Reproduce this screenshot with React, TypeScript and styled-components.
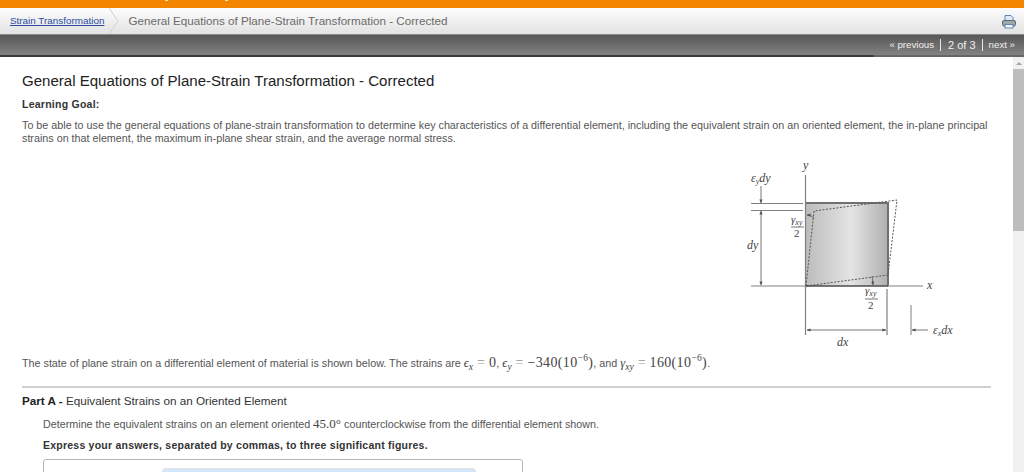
import React from "react";
import styled, { createGlobalStyle } from "styled-components";

const Global = createGlobalStyle`
  html, body { margin: 0; padding: 0; height: 100%; overflow: hidden; background: #fff; }
  body { font-family: "Liberation Sans", Arial, sans-serif; }
  #root { height: 472px; }
`;

const Page = styled.div`
  width: 1024px;
  height: 472px;
  display: flex;
  flex-direction: column;
  overflow: hidden;
`;
const OrangeBar = styled.div`
  height: 8px;
  flex: none;
  display: flex;
  gap: 57px;
  padding-left: 165px;
  box-sizing: border-box;
  background: #f38500;
`;
const Speck = styled.span`
  width: 3px;
  height: 1px;
  background: #fbe3c4;
`;
const Crumbs = styled.div`
  height: 27px;
  box-sizing: border-box;
  flex: none;
  display: flex;
  align-items: center;
  padding: 0 8px 2px 10px;
  background: linear-gradient(#fdfdfd, #e2e2e2);
  border-bottom: 1px solid #8a8a8a;
`;
const CrumbLink = styled.a`
  color: #2b4aa0;
  text-decoration: underline;
  font-size: 9.9px;
`;
const CrumbSep = styled.svg`
  width: 12px;
  height: 26px;
  margin: 2px 7px 0 5px;
  flex: none;
`;
const CrumbTitle = styled.span`
  flex: 1;
  color: #6a6a6a;
  font-size: 11.65px;
`;
const NavBar = styled.div`
  height: 20px;
  flex: none;
  display: flex;
  align-items: center;
  justify-content: flex-end;
  padding-right: 3px;
  background: linear-gradient(#575757, #828282);
  border-bottom: 2px solid;
  border-image: linear-gradient(to right, #3a3a3a 873px, #666 873px) 1;
  color: #f0f0f0;
  font-size: 9.7px;
`;
const NavItem = styled.span<{ $sep?: boolean }>`
  padding: 0 6px;
  line-height: 12px;
  border-left: ${(p) => (p.$sep ? "1px solid #e6e6e6" : "none")};
`;
const NavCount = styled(NavItem)`
  padding: 0 6px 0 7px;
  font-size: 11px;
`;
const Body = styled.div`
  flex: 1;
  min-height: 0;
  display: flex;
`;
const Main = styled.main`
  flex: 1;
  min-width: 0;
  overflow: hidden;
  padding: 15px 22px 0 22px;
`;
const Scrollbar = styled.div`
  width: 11px;
  flex: none;
  display: flex;
  flex-direction: column;
  background: #f1f1f1;
`;
const ScrollUp = styled.div`
  height: 12px;
  flex: none;
  display: flex;
  align-items: center;
  justify-content: center;
  &::before {
    content: "";
    border-left: 3px solid transparent;
    border-right: 3px solid transparent;
    border-bottom: 3px solid #a3a3a3;
  }
`;
const ScrollThumb = styled.div`
  height: 162px;
  flex: none;
  background: #bdbdbd;
`;
const Heading = styled.h1`
  margin: 0;
  font-size: 15.05px;
  line-height: 18px;
  font-weight: normal;
  color: #222;
`;
const GoalLabel = styled.div`
  margin-top: 8px;
  font-size: 10.5px;
  line-height: 13px;
  font-weight: bold;
  letter-spacing: 0.25px;
  color: #333;
`;
const Para = styled.p`
  margin: 8px 0 0;
  font-size: 10.75px;
  line-height: 13px;
  color: #555;
`;
const FigureRow = styled.div`
  display: flex;
  justify-content: flex-end;
  margin-top: 8px;
  padding-right: 21px;
`;
const Figure = styled.svg`
  width: 240px;
  height: 195px;
  display: block;
  flex: none;
`;
const StateLine = styled.p`
  margin: 6px 0 0;
  height: 18px;
  font-size: 10.75px;
  line-height: 18px;
  color: #555;
  white-space: nowrap;
`;
const MathText = styled.span`
  font-family: "Liberation Serif", serif;
  font-size: 14px;
  line-height: 1;
  letter-spacing: 0.35px;
  color: #444;
`;
const Angle = styled(MathText)`
  font-size: 13px;
  letter-spacing: 0;
`;
const Eq = styled.span`
  margin: 0 4px;
  font-family: "Liberation Serif", serif;
  font-size: 14px;
  line-height: 1;
  color: #999;
`;
const MathVar = styled.i`
  font-family: "Liberation Serif", serif;
  font-size: 12.5px;
  line-height: 1;
  color: #444;
`;
const Sub = styled.sub`
  font-family: "Liberation Serif", serif;
  font-size: 9.5px;
  font-style: italic;
  line-height: 0;
  color: #444;
`;
const Sup = styled.sup`
  font-family: "Liberation Serif", serif;
  font-size: 9.5px;
  line-height: 0;
`;
const Rule = styled.hr`
  margin: 14px 0 0;
  height: 2px;
  border: none;
  background: #cfcfcf;
`;
const PartTitle = styled.h2`
  margin: 5px 0 0;
  font-size: 11.7px;
  line-height: 15px;
  font-weight: normal;
  color: #333;
`;
const PartStrong = styled.strong`
  font-weight: bold;
  color: #222;
`;
const PartBody = styled.div`
  padding-left: 21px;
`;
const PartPara = styled.p`
  margin: 9px 0 0;
  font-size: 10.75px;
  line-height: 14px;
  color: #555;
`;
const Instruction = styled.p`
  margin: 7px 0 0;
  font-size: 10.5px;
  line-height: 14px;
  font-weight: bold;
  letter-spacing: 0.23px;
  color: #333;
`;
const AnswerBox = styled.div`
  width: 480px;
  height: 40px;
  margin-top: 7px;
  padding: 8px 0 0 118px;
  box-sizing: border-box;
  border: 1px solid #b5b5b5;
  border-radius: 3px;
`;
const AnswerBar = styled.div`
  width: 314px;
  height: 30px;
  box-sizing: border-box;
  border-top: 1px solid #e2e2e2;
  border-radius: 4px;
  background: #d3e6fa;
`;
const PrinterSvg = styled.svg`
  width: 14px;
  height: 14px;
  margin-top: 3px;
  flex: none;
`;

const PrinterIcon = () => (
  <PrinterSvg viewBox="0 0 14 14" aria-hidden="true">
    <path d="M3 6V0.5h6l2 2V6z" fill="#dbe9f8" stroke="#5f86b3" />
    <rect x="0.5" y="5.5" width="13" height="5.5" rx="1.5" fill="#9ea6ae" stroke="#5e6972" />
    <rect x="3" y="9.5" width="8" height="3.5" fill="#f2f6fa" stroke="#5f86b3" />
  </PrinterSvg>
);

const serif = { fontFamily: "'Liberation Serif', serif", fill: "#444" } as const;

const Diagram = () => (
  <Figure viewBox="0 0 240 195" aria-label="Strain diagram">
    <defs>
      <linearGradient id="steel" x1="0" x2="1" y1="0" y2="0">
        <stop offset="0" stopColor="#bcbcbc" />
        <stop offset="0.55" stopColor="#e4e4e4" />
        <stop offset="1" stopColor="#b0b0b0" />
      </linearGradient>
      <marker id="ah" markerWidth="5" markerHeight="5" refX="4.5" refY="2.5" orient="auto-start-reverse">
        <path d="M0 0.5 L5 2.5 L0 4.5z" fill="#555" />
      </marker>
    </defs>
    <rect x="76" y="50" width="82" height="83" fill="url(#steel)" />
    <path d="M76 50H158V133" fill="none" stroke="#707070" strokeWidth="2" />
    <g stroke="#808080" strokeWidth="1.2" fill="none">
      <path d="M75.5 22V182" />
      <path d="M21 133H193" />
      <path d="M21 50.5H73M21 57.5H73" />
      <path d="M157 136V182" />
      <path d="M181 152V182" stroke="#aaa" strokeWidth="1.5" />
    </g>
    <path d="M76 133L84 58L167 47L158 122L76 133" fill="none" stroke="#555" strokeWidth="1" strokeDasharray="2 1.5" />
    <path d="M76 133H158" stroke="#333" strokeWidth="1" />
    <g stroke="#555" strokeWidth="0.8" fill="none">
      <path d="M31 33V50" markerEnd="url(#ah)" />
      <path d="M31 58V132" markerStart="url(#ah)" markerEnd="url(#ah)" />
      <path d="M77 177H156" markerStart="url(#ah)" markerEnd="url(#ah)" />
      <path d="M198 177H182" markerEnd="url(#ah)" />
      <path d="M84 65 A10 10 0 0 0 77 62" markerEnd="url(#ah)" />
      <path d="M142 123 L143 132" markerEnd="url(#ah)" />
    </g>
    <g fontSize="12" fontStyle="italic" style={serif}>
      <text x="73" y="16">y</text>
      <text x="21" y="29">ε<tspan fontSize="8" dy="2">y</tspan><tspan dy="-2">dy</tspan></text>
      <text x="17" y="96">dy</text>
      <text x="197" y="136">x</text>
      <text x="107" y="193">dx</text>
      <text x="203" y="181">ε<tspan fontSize="8" dy="2">x</tspan><tspan dy="-2">dx</tspan></text>
    </g>
    <g fontSize="11" style={serif}>
      <text x="61" y="70" fontStyle="italic">γ<tspan fontSize="8" dy="2">xy</tspan></text>
      <path d="M61 74H74" stroke="#555" strokeWidth="0.8" />
      <text x="64" y="84">2</text>
      <text x="135" y="141" fontStyle="italic">γ<tspan fontSize="8" dy="2">xy</tspan></text>
      <path d="M135 146H148" stroke="#555" strokeWidth="0.8" />
      <text x="138" y="156">2</text>
    </g>
  </Figure>
);

export default function App() {
  return (
    <Page>
      <Global />
      <OrangeBar>
        <Speck />
        <Speck />
      </OrangeBar>
      <Crumbs>
        <CrumbLink>Strain Transformation</CrumbLink>
        <CrumbSep viewBox="0 0 12 26" aria-hidden="true">
          <path d="M0 0L9 13L0 26" fill="none" stroke="#d0d0d0" />
        </CrumbSep>
        <CrumbTitle>General Equations of Plane-Strain Transformation - Corrected</CrumbTitle>
        <PrinterIcon />
      </Crumbs>
      <NavBar>
        <NavItem>« previous</NavItem>
        <NavCount $sep>2 of 3</NavCount>
        <NavItem $sep>next »</NavItem>
      </NavBar>
      <Body>
        <Main>
          <Heading>General Equations of Plane-Strain Transformation - Corrected</Heading>
          <GoalLabel>Learning Goal:</GoalLabel>
          <Para>
            To be able to use the general equations of plane-strain transformation to determine key characteristics of a differential element, including the equivalent strain on an oriented element, the in-plane principal strains on that element, the maximum in-plane shear strain, and the average normal stress.
          </Para>
          <FigureRow>
            <Diagram />
          </FigureRow>
          <StateLine>
            The state of plane strain on a differential element of material is shown below. The strains are{" "}
            <MathVar>ϵ</MathVar><Sub>x</Sub><Eq>=</Eq><MathText>0</MathText>, <MathVar>ϵ</MathVar><Sub>y</Sub>
            <Eq>=</Eq><MathText>−340(10<Sup>−6</Sup>)</MathText>, and <MathVar>γ</MathVar><Sub>xy</Sub>
            <Eq>=</Eq><MathText>160(10<Sup>−6</Sup>)</MathText>.
          </StateLine>
          <Rule />
          <PartTitle><PartStrong>Part A - </PartStrong>Equivalent Strains on an Oriented Element</PartTitle>
          <PartBody>
            <PartPara>
              Determine the equivalent strains on an element oriented <Angle>45.0°</Angle> counterclockwise from the differential element shown.
            </PartPara>
            <Instruction>Express your answers, separated by commas, to three significant figures.</Instruction>
            <AnswerBox><AnswerBar /></AnswerBox>
          </PartBody>
        </Main>
        <Scrollbar>
          <ScrollUp />
          <ScrollThumb />
        </Scrollbar>
      </Body>
    </Page>
  );
}
